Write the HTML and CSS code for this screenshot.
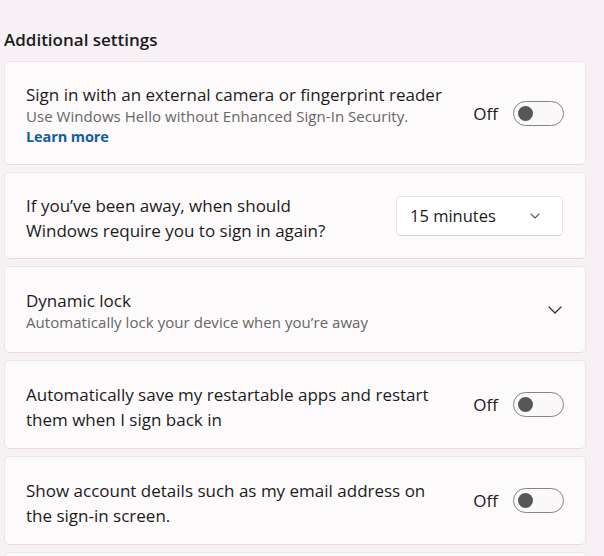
FILE: index.html
```html
<!DOCTYPE html>
<html lang="en">
<head>
<meta charset="utf-8">
<title>Additional settings</title>
<link rel="stylesheet" href="styles.css">
</head>
<body>
<main class="page">
  <h2 class="section-title">Additional settings</h2>
  <div class="cards">
    <section class="card card-1">
      <div class="text">
        <div class="title">Sign in with an external camera or fingerprint reader</div>
        <div class="desc">Use Windows Hello without Enhanced Sign-In Security.</div>
        <a class="link" href="#">Learn more</a>
      </div>
      <div class="control">
        <span class="state">Off</span>
        <span class="toggle"><span class="knob"></span></span>
      </div>
    </section>

    <section class="card card-2">
      <div class="text">
        <div class="title two">If you’ve been away, when should<br>Windows require you to sign in again?</div>
      </div>
      <div class="control">
        <div class="select">
          <span>15 minutes</span>
          <svg class="chev-small" width="10" height="6" viewBox="0 0 10 6"><path d="M1 1 L5 5 L9 1" fill="none" stroke="#5a5a5a" stroke-width="1.1" stroke-linecap="round" stroke-linejoin="round"/></svg>
        </div>
      </div>
    </section>

    <section class="card card-3">
      <div class="text">
        <div class="title">Dynamic lock</div>
        <div class="desc">Automatically lock your device when you’re away</div>
      </div>
      <div class="control">
        <svg class="chev" width="14" height="8" viewBox="0 0 14 8"><path d="M1 1 L7 7 L13 1" fill="none" stroke="#2a2a2a" stroke-width="1.2" stroke-linecap="round" stroke-linejoin="round"/></svg>
      </div>
    </section>

    <section class="card card-4">
      <div class="text">
        <div class="title two">Automatically save my restartable apps and restart<br>them when I sign back in</div>
      </div>
      <div class="control">
        <span class="state">Off</span>
        <span class="toggle"><span class="knob"></span></span>
      </div>
    </section>

    <section class="card card-5">
      <div class="text">
        <div class="title two">Show account details such as my email address on<br>the sign-in screen.</div>
      </div>
      <div class="control">
        <span class="state">Off</span>
        <span class="toggle"><span class="knob"></span></span>
      </div>
    </section>

    <section class="card card-6"></section>
  </div>
</main>
</body>
</html>
```

FILE: styles.css
```css
* { box-sizing: border-box; }
html, body {
  margin: 0;
  padding: 0;
  background: #f7f0f4;
  font-family: "Open Sans", "Noto Sans", sans-serif;
  color: #1b1b1b;
  overflow: hidden;
  height: 556px;
}
.page {
  width: 582px;
  margin-left: 4px;
  padding-top: 29px;
}
.section-title {
  margin: 0 0 10px 0;
  font-size: 17px;
  font-weight: 600;
  line-height: 22px;
}
.cards {
  display: flex;
  flex-direction: column;
  gap: 7px;
}
.card {
  display: flex;
  align-items: center;
  justify-content: space-between;
  background: #fdfafc;
  border: 1px solid #ebe5e9;
  border-bottom-color: #e2dce0;
  border-radius: 5px;
  padding: 0 21px 0 21px;
}
.card-1 { height: 104px; }
.card-2 { height: 87px; }
.card-3 { height: 87px; }
.card-4 { height: 89px; }
.card-5 { height: 89px; }
.card-6 { height: 40px; }
.text {
  display: flex;
  flex-direction: column;
  padding-top: 4px;
}
.title {
  font-size: 17px;
  line-height: 22px;
}
.title.two { line-height: 25px; }
.desc {
  font-size: 15px;
  line-height: 21px;
  color: #666;
  letter-spacing: 0.05px;
}
.link {
  font-size: 14.5px;
  line-height: 20px;
  font-weight: 700;
  color: #115ea3;
  text-decoration: none;
  letter-spacing: -0.1px;
}
.control {
  display: flex;
  align-items: center;
  gap: 15px;
}
.state {
  font-size: 17px;
  color: #1b1b1b;
}
.toggle {
  position: relative;
  display: inline-block;
  width: 51px;
  height: 25px;
  border: 1px solid #858585;
  border-radius: 13px;
  background: #fbf8fa;
}
.knob {
  position: absolute;
  left: 4px;
  top: 4px;
  width: 15px;
  height: 15px;
  border-radius: 50%;
  background: #575757;
}
.select {
  display: flex;
  align-items: center;
  justify-content: space-between;
  width: 167px;
  height: 40px;
  padding: 0 22px 0 13px;
  background: #ffffff;
  border: 1px solid #e6e1e4;
  border-bottom-color: #d4cfd2;
  border-radius: 5px;
  font-size: 16.5px;
  margin-right: 1px;
}
.chev { margin-right: 2px; }
```
